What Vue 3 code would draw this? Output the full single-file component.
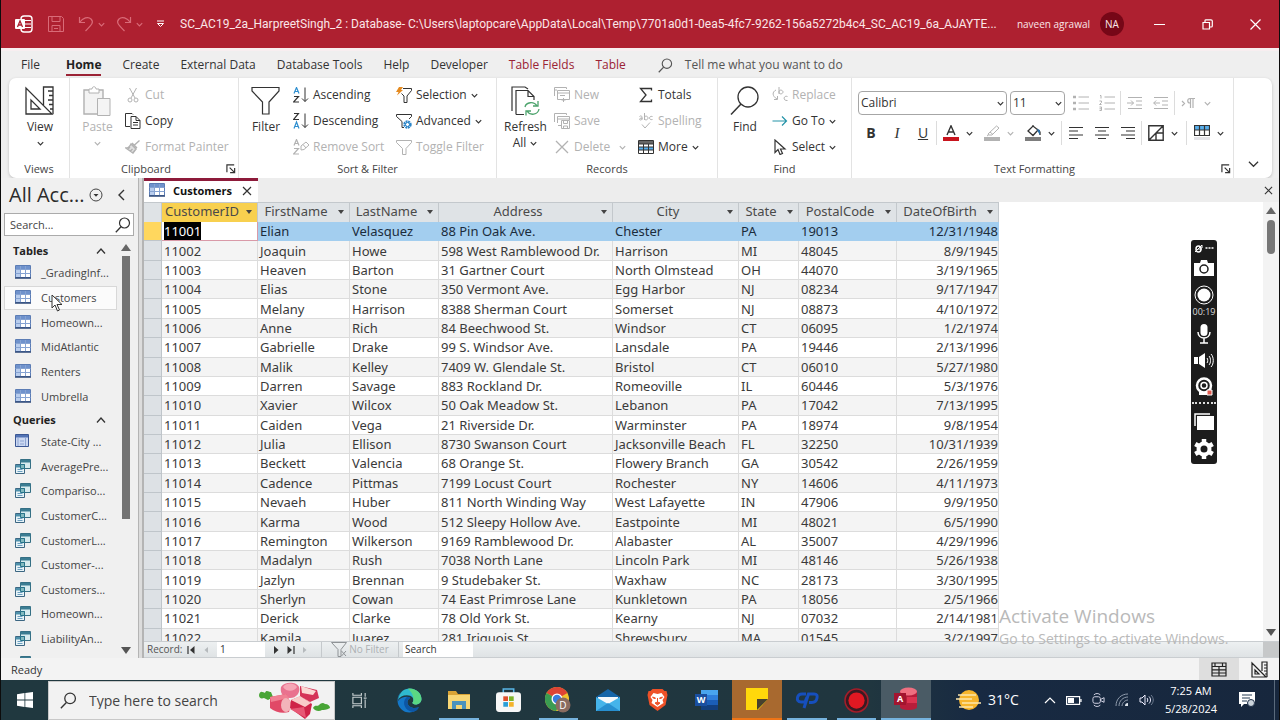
<script setup>
import { h } from 'vue'

const svgIcon = (props) =>
  h('svg', {
    viewBox: props.box || '0 0 16 16',
    width: props.w || 16,
    height: props.h || props.w || 16,
    fill: 'none',
    stroke: 'currentColor',
    'aria-hidden': 'true',
    innerHTML: shapes[props.name],
  })
svgIcon.props = ['name', 'box', 'w', 'h']
const Icon = svgIcon

const shapes = {
  chev: '<path d="M2 3.500 5 6.500 8 3.500" stroke-width="1.300"/>',
  cut: '<path d="M4.500 1l5.500 10M11.500 1 6 11"/><circle cx="5" cy="13" r="2"/><circle cx="11" cy="13" r="2"/>',
  copy: '<path d="M5 13.500H.5v-13H7l1 1M6 3.500h5l4 4v8H6zM11 3.500v4h4M8 9.500h5M8 12h5"/>',
  painter: '<path d="M14.500 1.500 9.500 6M7 4l5 5M6 5l5 5-3 4-7-5c2 0 4-2 5-4zM3 10l2-2M5.500 12l2-2M8 14l2-3" stroke-width="1.400"/><path d="M6 5l5 5-3 4-4-3z" fill="currentColor" opacity=".4"/>',
  sortAZ: '<path d="M1 6.500 3.500.5 6 6.500M2 4.500h3" stroke="#2f8fd0" stroke-width="1.200"/><path d="M1 9.500h4.500l-5 5.500H6" stroke-width="1.200"/><path d="M12 .5v14M9 11.500l3 3 3-3"/>',
  sortZA: '<path d="M1 .5h4.500l-5 6H6" stroke-width="1.200"/><path d="M1 15.500 3.500 9 6 15.500M2 13.500h3" stroke="#2f8fd0" stroke-width="1.200"/><path d="M12 .5v14M9 11.500l3 3 3-3"/>',
  sortX: '<path d="M1 6.500 3.500.5 6 6.500M2 4.500h3M1 9.500h4.500l-5 5.500H6" stroke-width="1.200"/><path d="M8 7l5-4 3 3-5 4.500-3 .5zM10 5.500l3 3.500"/>',
  filterBig: '<path d="M1 1.500h27v3.500L18 16v12h-6.500V16L1 5z" stroke-width="1.200"/>',
  filterFlash: '<path d="M7 1.500h8.500v2L11 9v6.500H8V9L5.500 6.500"/><path d="M3 0h4L5 3h2L1 8.500 2.500 5H0z" fill="#e58a1f" stroke="none"/>',
  filterGear: '<path d="M8 14.500H6V8.500L.5 3.500v-2h15v2L13 6"/><circle cx="11.500" cy="11.500" r="3" stroke="#2d86c9" stroke-width="2.400" stroke-dasharray="1.800 .6"/><circle cx="11.500" cy="11.500" r="2" stroke="#2d86c9"/>',
  filter: '<path d="M.5 1.500h15v2L10 9.500v6H6.500v-6L.5 3.500z"/>',
  design: '<path d="M1 2v26h26zM6 14v9h9z" stroke-width="1.300"/><path d="M18.500 19V1H28v27M28 5h-5M28 9.500h-4M28 14h-5M28 18.500h-4M28 23h-3" stroke-width="1.300"/>',
  paste: '<path d="M7 4H1v24h13M7 4h13v8" stroke-width="1.400"/><path d="M1 4h19v8h-6v16H1z" fill="currentColor" opacity=".14"/><path d="M6 7V3h3c0-3 4-3 4 0h3v4z" fill="#fff"/><path d="M14.500 12.500H27v17H14.500z" fill="#f4f4f4"/>',
  refresh: '<path d="M1 25V1h13l3 2M5 28.500h8M5 28.500V4.500h12l6 6V14M17 4.500v6h6" stroke-width="1.200"/><path d="M14 21c1-5 9-6 12-1M27 15v5h-5M28 23c-1 6-9 7-12 2M15 29.500V25h5" stroke="#4ca36c" stroke-width="1.300"/>',
  newrec: '<path d="M.5 9V.5h12V2M3.500 12.500v-9h12v9h-12M3.500 6h12M6 8.500h5M9.500 11v4M7.500 13h4M1 3h2"/>',
  saverec: '<path d="M.5 9V.5h12V2M3.500 10V3.500h12V7M3.500 6h12M7.500 7.500h8v8h-8zM9.500 7.500v3h4v-3M9.500 15.500v-2.500h4v2.500M4 12.500h3"/>',
  del: '<path d="M2 2l12 12M14 2 2 14" stroke-width="1.300"/>',
  sigma: '<path d="M13.500 3.500v-2h-11L8 8l-5.500 6.500h11v-2" stroke-width="1.300"/>',
  spell: '<path d="M1.500 3.500c2-1.500 3 0 2.500 3M4 5c-3 0-3 2-1.500 2S4 6 4 5M6.500 0v7M6.500 5c0-3 3.500-2 3.500 0s-3.500 3-3.500 0M14.500 3.500c-4-1-4 4 0 3M4 11.500l3 3.500 5-5.500"/>',
  more: '<path d="M.5 1.500h15v13H.5z"/><path d="M1 2h14v3H1z" fill="#666" stroke="none"/><path d="M1 8h14v3H1z" fill="#58aeea" stroke="none"/><path d="M.5 5h15M.5 8h15M.5 11h15M5.500 5v9.500M10.500 5v9.500"/>',
  find: '<circle cx="18" cy="11" r="10" stroke-width="1.300"/><path d="M11 18 1 28.500" stroke-width="1.500"/>',
  replace: '<path d="M7 0v7M7 5c0-3 4-2 4 0s-4 3-4 0M15.500 9.500c-4-1.500-5 4.500 0 4M4 3c-4 2-4 6 1 9M2 12.500h3.500V9"/>',
  goto: '<path d="M.5 8h14M10 3.500 14.500 8 10 12.500" stroke="#2493a8" stroke-width="1.200"/>',
  pointer: '<path d="M3 1v12.500l3-3 2 5 2.500-1-2-4.500H13z" stroke-width="1.200"/>',
  bullets: '<path d="M0 2h3M0 8h3M0 14h3" stroke-width="2.500"/><path d="M5.500 2H16M5.500 8H16M5.500 14H16"/>',
  numbers: '<path d="M1 .5h1v3M.5 6h2v1.500l-2 2h2M.5 12h2v3.500h-2M.5 13.800h2"/><path d="M5.500 2H16M5.500 8H16M5.500 14H16"/>',
  indent: '<path d="M1 2.500h14M9 6h6M9 10h6M1 13.500h14M0 8h6.500M4 5.500 6.500 8 4 10.500"/>',
  outdent: '<path d="M1 2.500h14M9 6h6M9 10h6M1 13.500h14M7 8H.7M3.200 5.500.7 8l2.500 2.500"/>',
  ltr: '<path d="M1 6l2.500 2.500L1 11M9.500 13V3.500M12 13V3.500M14 3.500H9c-3 0-3 4.500 0 4.500" stroke-width="1.200"/>',
  fontcolor: '<path d="M4 10 8 .8 12 10M5.500 7h5" stroke-width="1.400"/><path d="M0 12h16v4H0z" fill="#c8141d" stroke="none"/>',
  marker: '<path d="M12.500 1 15 3 8 10H4.500L4 9zM6 7l3 2.500M4.500 10 3 11"/><path d="M0 12h16v4H0z" fill="currentColor" stroke="none"/>',
  bucket: '<path d="M3 6 8 1l5 4-5 5.500zM8 1V0M12 4l3 3v3" stroke-width="1.300"/><path d="M12 4l3 1v5l-2-3z" fill="#2b6fa8" stroke="none"/><path d="M0 12h16v4H0z" fill="#7d7d7d" stroke="none"/>',
  left: '<path d="M1 2.500h14M1 6h9M1 10h14M1 13.500h9" stroke-width="1.200"/>',
  center: '<path d="M1 2.500h14M4 6h8M1 10h14M4 13.500h8" stroke-width="1.200"/>',
  right: '<path d="M1 2.500h14M6 6h9M1 10h14M6 13.500h9" stroke-width="1.200"/>',
  gridlines: '<path d="M.8.8h14.400v14.400H.8zM.8 15.200 15.200.8M8 8v7M8 8h7" stroke-width="1.400"/>',
  altrow: '<path d="M1 1h14v4H1z" fill="#58aeea" stroke="none"/><path d="M.5.5h15v10H.5zM.5 5h15M5.500.5v10M10.500.5v10" stroke-width="1.200"/><path d="M0 12h16v3H0z" fill="#e4e4e8" stroke="none"/>',
  launch: '<path d="M1 9V1h8M4 4l5 5M9.500 4.500v5h-5" stroke-width="1.300"/>',
  mag: '<circle cx="9.500" cy="6" r="5" stroke-width="1.200"/><path d="M6 9.800.8 15.200" stroke-width="1.300"/>',
  x: '<path d="M1 1l8 8M9 1 1 9" stroke-width="1.200"/>',
  table: '<path d="M.5.5h15v12H.5z" fill="#fff" stroke="#5b7cb4"/><path d="M1 1h14v3H1z" fill="#6f92cc" stroke="none"/><path d="M1 4h4v8H1z" fill="#b8cdee" stroke="none"/><path d="M.5 4.500h15M.5 8.500h15M5.500 1v12M10.500 1v12" stroke="#86a3d2"/><path d="M0 13h16" stroke="#2e4977" stroke-width="1.500"/>',
  form: '<path d="M.5.5h13v12H.5z" fill="#cbd8f2" stroke="#3b5794"/><path d="M1 1h12v2.500H1z" fill="#5273b5" stroke="none"/><path d="M3 4v8M10.500 4v8M5 7h4M5 10h4" stroke="#8ea5d2"/>',
  query: '<path d="M5.500.5h10v9h-10z" fill="#d7ebef" stroke="#356f84"/><path d="M5.500 1h10v2.500h-10z" fill="#3b7c92" stroke="none"/><path d="M.5 5.500h9v9h-9z" fill="#e8f4f8" stroke="#3c6682"/><path d="M.5 6h9v2.500h-9z" fill="#4f91ab" stroke="none"/><path d="M2.500 10.500h5M2.500 12.500h5" stroke="#6c9fc0"/><path d="M5.500 5.500h4v4h-4z" fill="#83b9bf" stroke="#26748a"/>',
}

const navTabs = ['File', 'Home', 'Create', 'External Data', 'Database Tools', 'Help', 'Developer', 'Table Fields', 'Table']

const groups = [
  { name: 'Views', cls: 'g-views', big: { label: 'View', icon: 'design', chev: true }, cols: [] },
  {
    name: 'Clipboard', cls: 'g-clip', launch: true,
    big: { label: 'Paste', icon: 'paste', chev: true, off: true },
    cols: [[['cut', 'Cut', 1], ['copy', 'Copy'], ['painter', 'Format Painter', 1]]],
  },
  {
    name: 'Sort & Filter', cls: 'g-sort', big: { label: 'Filter', icon: 'filterBig' },
    cols: [
      [['sortAZ', 'Ascending'], ['sortZA', 'Descending'], ['sortX', 'Remove Sort', 1]],
      [['filterFlash', 'Selection', 0, 1], ['filterGear', 'Advanced', 0, 1], ['filter', 'Toggle Filter', 1]],
    ],
  },
  {
    name: 'Records', cls: 'g-rec', big: { label: 'Refresh', second: 'All', icon: 'refresh' },
    cols: [
      [['newrec', 'New', 1], ['saverec', 'Save', 1], ['del', 'Delete', 1, 2]],
      [['sigma', 'Totals'], ['spell', 'Spelling', 1], ['more', 'More', 0, 1]],
    ],
  },
  {
    name: 'Find', cls: 'g-find', big: { label: 'Find', icon: 'find' },
    cols: [[['replace', 'Replace', 1], ['goto', 'Go To', 0, 1], ['pointer', 'Select', 0, 1]]],
  },
]

const tables = ['_GradingInf...', 'Customers', 'Homeown...', 'MidAtlantic', 'Renters', 'Umbrella']
const queries = ['State-City ...', 'AveragePre...', 'Compariso...', 'CustomerC...', 'CustomerL...', 'Customer-...', 'Customers...', 'Homeown...', 'LiabilityAn...']

const columns = ['CustomerID', 'FirstName', 'LastName', 'Address', 'City', 'State', 'PostalCode', 'DateOfBirth']
const rows = `Elian|Velasquez|88 Pin Oak Ave.|Chester|PA|19013|12/31/1948
Joaquin|Howe|598 West Ramblewood Dr.|Harrison|MI|48045|8/9/1945
Heaven|Barton|31 Gartner Court|North Olmstead|OH|44070|3/19/1965
Elias|Stone|350 Vermont Ave.|Egg Harbor|NJ|08234|9/17/1947
Melany|Harrison|8388 Sherman Court|Somerset|NJ|08873|4/10/1972
Anne|Rich|84 Beechwood St.|Windsor|CT|06095|1/2/1974
Gabrielle|Drake|99 S. Windsor Ave.|Lansdale|PA|19446|2/13/1996
Malik|Kelley|7409 W. Glendale St.|Bristol|CT|06010|5/27/1980
Darren|Savage|883 Rockland Dr.|Romeoville|IL|60446|5/3/1976
Xavier|Wilcox|50 Oak Meadow St.|Lebanon|PA|17042|7/13/1995
Caiden|Vega|21 Riverside Dr.|Warminster|PA|18974|9/8/1954
Julia|Ellison|8730 Swanson Court|Jacksonville Beach|FL|32250|10/31/1939
Beckett|Valencia|68 Orange St.|Flowery Branch|GA|30542|2/26/1959
Cadence|Pittmas|7199 Locust Court|Rochester|NY|14606|4/11/1973
Nevaeh|Huber|811 North Winding Way|West Lafayette|IN|47906|9/9/1950
Karma|Wood|512 Sleepy Hollow Ave.|Eastpointe|MI|48021|6/5/1990
Remington|Wilkerson|9169 Ramblewood Dr.|Alabaster|AL|35007|4/29/1996
Madalyn|Rush|7038 North Lane|Lincoln Park|MI|48146|5/26/1938
Jazlyn|Brennan|9 Studebaker St.|Waxhaw|NC|28173|3/30/1995
Sherlyn|Cowan|74 East Primrose Lane|Kunkletown|PA|18056|2/5/1966
Derick|Clarke|78 Old York St.|Kearny|NJ|07032|2/14/1981
Kamila|Juarez|281 Iriquois St.|Shrewsbury|MA|01545|3/2/1997`
  .split('\n')
  .map((line, i) => [String(11001 + i), ...line.split('|')])
</script>

<template>
  <div class="screen">
    <header class="titlebar">
      <div class="quick">
        <svg class="logo" viewBox="0 0 18 18" width="18" height="18" aria-hidden="true">
          <rect x="6" y="1" width="11" height="16" rx="3" fill="none" stroke="#fff" stroke-width="1.400" />
          <path d="M8 5.500h8M8 9h8M8 12.500h8" stroke="#fff" />
          <rect x="0" y="4" width="10" height="10" rx="1" fill="#fff" />
          <path d="M2.500 12 5 6l2.500 6M3.500 10h3" fill="none" stroke="#ae2030" stroke-width="1.300" />
        </svg>
        <button class="qbtn save" aria-label="Save"><svg viewBox="0 0 16 16" width="16" height="16"><path d="M.5.5h13l2 2v13H.5zM4 .5v5h8v-5M4 15.500v-6h8v6M6 12.500h4" fill="none" stroke="currentColor" /></svg></button>
        <button class="qbtn undo" aria-label="Undo"><svg viewBox="0 0 16 16" width="16" height="16"><path d="M1.500 1v5.500H7M1.500 6.500C5 2 10 0 13 3s1.500 5-5.500 12" fill="none" stroke="currentColor" stroke-width="1.200" /></svg><Icon name="chev" box="0 0 10 10" w="9" /></button>
        <button class="qbtn redo" aria-label="Redo"><svg viewBox="0 0 16 16" width="16" height="16"><path d="M14.500 1v5.500H9M14.500 6.500C11 2 6 0 3 3s-1.500 5 5.500 12" fill="none" stroke="currentColor" stroke-width="1.200" /></svg><Icon name="chev" box="0 0 10 10" w="9" /></button>
        <button class="qbtn custom" aria-label="Customize toolbar"><svg viewBox="0 0 9 8" width="9" height="8"><path d="M1 1h7M1.500 3.500 4.500 6.500 7.500 3.500z" fill="none" stroke="#fff" /></svg></button>
      </div>
      <div class="title">SC_AC19_2a_HarpreetSingh_2 : Database- C:\Users\laptopcare\AppData\Local\Temp\7701a0d1-0ea5-4fc7-9262-156a5272b4c4_SC_AC19_6a_AJAYTE...</div>
      <div class="account"><span>naveen agrawal</span><b class="avatar">NA</b></div>
      <div class="winbtns">
        <button aria-label="Minimize"><svg viewBox="0 0 11 11" width="11" height="11"><path d="M0 5.500h11" stroke="#fff" /></svg></button>
        <button aria-label="Restore"><svg viewBox="0 0 11 11" width="11" height="11"><path d="M1 3.500h6.500V10H1zM3 3V1.500C3 1 3.500.8 4 .8h5c1 0 1.300.3 1.300 1.300V7c0 .7-.3 1-1 1H8" fill="none" stroke="#fff" stroke-width="1.200" /></svg></button>
        <button aria-label="Close"><svg viewBox="0 0 11 11" width="11" height="11"><path d="M.5.5l10 10M10.500.5l-10 10" stroke="#fff" stroke-width="1.200" /></svg></button>
      </div>
    </header>

    <nav class="tabs">
      <button v-for="t in navTabs" :key="t" :class="{ current: t === 'Home', context: t.startsWith('Table') }"><span>{{ t }}</span></button>
      <button class="tell"><Icon name="mag" w="15" /> Tell me what you want to do</button>
    </nav>

    <section class="ribbon">
      <div v-for="g in groups" :key="g.name" class="group" :class="g.cls">
        <div class="body">
          <button class="big" :class="{ off: g.big.off, two: g.big.second }">
            <Icon :name="g.big.icon" box="0 0 30 30" w="30" />
            <span>{{ g.big.label }}</span>
            <span v-if="g.big.second" class="second">{{ g.big.second }} <Icon name="chev" box="0 0 10 10" w="9" /></span>
            <Icon v-if="g.big.chev" name="chev" box="0 0 10 10" w="9" />
          </button>
          <div v-for="(c, i) in g.cols" :key="i" class="col">
            <button v-for="b in c" :key="b[1]" class="small" :class="{ off: b[2], far: b[3] === 2 }">
              <Icon :name="b[0]" /><span>{{ b[1] }}</span><Icon v-if="b[3]" class="dd" name="chev" box="0 0 10 10" w="9" />
            </button>
          </div>
        </div>
        <div class="caption"><span>{{ g.name }}</span><button v-if="g.launch" aria-label="Clipboard options"><Icon name="launch" box="0 0 11 11" w="10" /></button></div>
      </div>

      <div class="group g-text">
        <div class="fmt">
          <div class="line first">
            <label class="pick font"><select aria-label="Font"><option>Calibri</option></select><Icon name="chev" box="0 0 10 10" w="9" /></label>
            <label class="pick size"><select aria-label="Font size"><option>11</option></select><Icon name="chev" box="0 0 10 10" w="9" /></label>
            <button class="ib off" aria-label="Bullets"><Icon name="bullets" /></button>
            <button class="ib off" aria-label="Numbering"><Icon name="numbers" /></button>
            <i class="sep"></i>
            <button class="ib off" aria-label="Increase indent"><Icon name="indent" /></button>
            <button class="ib off" aria-label="Decrease indent"><Icon name="outdent" /></button>
            <i class="sep"></i>
            <button class="split off" aria-label="Text direction"><Icon name="ltr" /><Icon name="chev" box="0 0 10 10" w="9" /></button>
          </div>
          <div class="line">
            <button class="ib" aria-label="Bold"><b>B</b></button>
            <button class="ib" aria-label="Italic"><em>I</em></button>
            <button class="ib" aria-label="Underline"><u>U</u></button>
            <i class="sep"></i>
            <button class="split" aria-label="Font color"><Icon name="fontcolor" /><Icon name="chev" box="0 0 10 10" w="9" /></button>
            <button class="split off" aria-label="Highlight"><Icon name="marker" /><Icon name="chev" box="0 0 10 10" w="9" /></button>
            <button class="split" aria-label="Fill color"><Icon name="bucket" /><Icon name="chev" box="0 0 10 10" w="9" /></button>
            <i class="sep"></i>
            <button class="ib" aria-label="Align left"><Icon name="left" /></button>
            <button class="ib" aria-label="Center"><Icon name="center" /></button>
            <button class="ib" aria-label="Align right"><Icon name="right" /></button>
            <i class="sep"></i>
            <button class="split" aria-label="Gridlines"><Icon name="gridlines" /><Icon name="chev" box="0 0 10 10" w="9" /></button>
            <i class="sep wide"></i>
            <button class="split" aria-label="Alternate row color"><Icon name="altrow" /><Icon name="chev" box="0 0 10 10" w="9" /></button>
          </div>
        </div>
        <div class="caption"><span>Text Formatting</span><button aria-label="Text formatting options"><Icon name="launch" box="0 0 11 11" w="10" /></button></div>
      </div>
      <button class="collapse" aria-label="Collapse ribbon"><svg viewBox="0 0 12 8" width="11" height="8"><path d="M1 1.500 6 6.500 11 1.500" fill="none" stroke="#333" stroke-width="1.300" /></svg></button>
    </section>

    <div class="work">
      <aside class="side">
        <div class="shead">
          <h2>All Acc...</h2>
          <button aria-label="Object type menu"><svg viewBox="0 0 14 14" width="14" height="14"><circle cx="7" cy="7" r="6" fill="none" stroke="#444" /><path d="M4.500 6h5L7 8.800z" fill="#333" /></svg></button>
          <button class="shut" aria-label="Collapse pane"><svg viewBox="0 0 7 12" width="7" height="12"><path d="M6 1 1 6l5 5" fill="none" stroke="#333" stroke-width="1.400" /></svg></button>
        </div>
        <label class="sfind"><input type="text" placeholder="Search..." aria-label="Search objects" /><Icon name="mag" w="16" /></label>
        <div class="objects">
          <div class="lists">
            <button class="ohead">Tables <svg viewBox="0 0 10 6" width="10" height="6"><path d="M1 5.500 5 1l4 4.500" fill="none" stroke="#333" stroke-width="1.300" /></svg></button>
            <ul class="six"><li v-for="t in tables" :key="t"><a href="#" :class="{ hot: t === 'Customers' }"><Icon name="table" /><span>{{ t }}</span></a></li></ul>
            <button class="ohead">Queries <svg viewBox="0 0 10 6" width="10" height="6"><path d="M1 5.500 5 1l4 4.500" fill="none" stroke="#333" stroke-width="1.300" /></svg></button>
            <ul class="ten"><li v-for="(t, i) in queries" :key="t"><a href="#"><Icon :name="i ? 'query' : 'form'" /><span>{{ t }}</span></a></li><li><a href="#" aria-label="Next query"><Icon name="query" /></a></li></ul>
          </div>
          <div class="sbar"><i class="up"></i><i class="thumb"></i><i class="space"></i><i class="down"></i></div>
        </div>
      </aside>
      <div class="splitter"></div>

      <main class="doc">
        <div class="doctabs">
          <div class="doctab"><Icon name="table" /><b>Customers</b><button aria-label="Close Customers"><Icon name="x" box="0 0 10 10" w="10" /></button></div>
          <button class="closeall" aria-label="Close"><Icon name="x" box="0 0 10 10" w="9" /></button>
        </div>
        <div class="sheet">
          <div class="viewport">
            <table>
              <colgroup><col class="c0" /><col v-for="c in columns" :key="c" :class="'c-' + c" /></colgroup>
              <thead>
                <tr><th class="sel"></th><th v-for="(c, i) in columns" :key="c" :class="{ active: i === 0 }"><div><span>{{ c }}</span><i class="arr"></i></div></th></tr>
              </thead>
              <tbody>
                <tr v-for="(r, i) in rows" :key="r[0]" :class="{ chosen: i === 0 }"><td class="sel"></td><td v-for="(v, j) in r" :key="j"><span>{{ v }}</span></td></tr>
              </tbody>
            </table>
          </div>
          <div class="vbar"><i class="up"></i><i class="thumb"></i><i class="space"></i><i class="down"></i></div>
        </div>
        <div class="recnav">
          <span class="rl">Record:</span>
          <button aria-label="First record"><svg viewBox="0 0 8 8" width="8" height="8"><path d="M1 0v8" stroke="#333" stroke-width="1.200" /><path d="M7.500 0v8L3 4z" fill="#333" /></svg></button>
          <button aria-label="Previous record"><svg viewBox="0 0 8 8" width="8" height="8"><path d="M6 1v6L2.500 4z" fill="#b5b9bc" /></svg></button>
          <input class="num" type="text" value="1" aria-label="Current record" />
          <button aria-label="Next record"><svg viewBox="0 0 8 8" width="8" height="8"><path d="M2 0v8l4.500-4z" fill="#333" /></svg></button>
          <button aria-label="Last record"><svg viewBox="0 0 8 8" width="8" height="8"><path d="M7 0v8" stroke="#333" stroke-width="1.200" /><path d="M.5 0v8L5 4z" fill="#333" /></svg></button>
          <button class="newr" aria-label="New record"><svg viewBox="0 0 8 8" width="8" height="8"><path d="M2 1v6l3.500-3z" fill="#b5b9bc" /></svg></button>
          <button class="nofilter"><svg viewBox="0 0 16 15" width="16" height="15"><path d="M.5.500h15L10 7.500v7H7v-7zM10.500 9l4.500 5M15 9l-4.500 5" fill="none" stroke="#8f9396" /></svg>No Filter</button>
          <input class="rsearch" type="text" value="Search" aria-label="Search records" />
          <i class="corner"></i>
        </div>
        <div class="watermark"><p>Activate Windows</p><p class="sub">Go to Settings to activate Windows.</p></div>
      </main>
    </div>

    <footer class="status">
      <span>Ready</span>
      <button class="on" aria-label="Datasheet view"><svg viewBox="0 0 16 15" width="16" height="15"><path d="M1 1h14v13H1zM1 4.500h14M1 7.800h14M1 11h14M8 4.500V14M4 1v3M11.500 1v3" fill="none" stroke="#222" stroke-width="1.200" /></svg></button>
      <button aria-label="Design view"><svg viewBox="0 0 17 17" width="17" height="17"><path d="M1 2v14h14zM4 9v4h4zM11 10V1h5v15M16 4h-3M16 7h-3M16 10h-3M16 13h-2" fill="none" stroke="#222" stroke-width="1.200" /></svg></button>
    </footer>

    <div class="taskbar">
      <button class="start" aria-label="Start"><svg viewBox="0 0 16 16" width="16" height="16"><path d="M0 2.200 7.500 1v6.600H0zM8.300.9 16 0v7.600H8.300zM0 8.400h7.500V15L0 13.800zM8.300 8.400H16V16l-7.700-1z" fill="#fff" /></svg></button>
      <label class="tsearch">
        <Icon name="mag" w="17" />
        <input type="text" placeholder="Type here to search" aria-label="Type here to search" />
        <svg viewBox="0 0 72 38" width="72" height="38" aria-hidden="true">
          <path d="M1 14c1-5 4-3 6-2 1-4 4-1 6-1l2 5-5 3-4-2c-3 1-5 0-5-3zM55 27c2-4 4-1 6-3s4-3 6-1c3 0 5 2 5 4-4 2-6 2-8 2-3 2-7 1-9-2z" fill="#48a536" />
          <path d="M23 6c4-6 16-5 18 0 2 6-4 12-10 11-7-1-9-6-8-11z" fill="#e9728f" /><path d="M25 6c4-5 12-4 14 0-2 4-10 6-14 0z" fill="#f6a7b6" />
          <path d="M12 16l16-3 5 9-2 9c-7 2-14 0-19-4z" fill="#e14967" /><path d="M12 16l16-3 3 4-18 4z" fill="#f08093" /><ellipse cx="28" cy="24" rx="5" ry="7" fill="#f3b4ba" />
          <path d="M42 5l17 4 2 8-9 4-10-6z" fill="#d53457" /><path d="M43 5l15 5-3 4-11-2z" fill="#fbd8d3" />
          <path d="M33 19l10-4 11 8-2 10-5 5-15-11z" fill="#cf2348" /><path d="M33 19l9-4 11 7-6 4z" fill="#f9cbc9" /><path d="M32 28l14-2 2 11z" fill="#e75875" />
        </svg>
      </label>
      <div class="apps">
        <button aria-label="Task view"><svg viewBox="0 0 18 18" width="17" height="17"><path d="M2 1v2.500h9V1M2 17v-2.500h9V17M2 5.500h9v7H2zM15 1v4M15 8v9M13.500 6.500h3" fill="none" stroke="#c8d0d2" stroke-width="1.200" /></svg></button>
        <button aria-label="Edge"><svg viewBox="0 0 24 24" width="25" height="25"><path d="M12 .5A11.500 11.500 0 1 0 12 23.500c4 0 7-2 9-5-5 2-11 0-11-5 0-2 2-4 3-4-3-2-9-1-12 3C1 5 6 .5 12 .5z" fill="#1477c8" /><path d="M1 11.500C2 4 7 .5 12 .5c7 0 11.500 5 11.500 10 0 4-4 6-7 5-2-.5-2-1.500-1-2.500 1-3-1-6-6-6-4 0-7 2-8.500 4.500z" fill="#2fb9cf" /><path d="M12 .5c7 0 11.500 5 11.500 10 0 4-4 6-7 5-2-.5-2-1.500-1-2.500 1-3 0-8-5-12.400z" fill="#5bd683" /><path d="M9 9c-5 5-1 13 6 14 3-.5 5-2 6-4.500-5 2-11 0-11-5 0-2 1-3 3-4-1-1-3-1-4-.5z" fill="#0d56a4" /></svg></button>
        <button class="run" aria-label="File Explorer"><svg viewBox="0 0 24 20" width="24" height="20"><path d="M1 1h8l2 3h12v15H1z" fill="#d9a436" /><path d="M1 5h22v14H1z" fill="#f8d775" /><path d="M5 19v-8h14v8h-4v-4H9v4z" fill="#4c93bd" /></svg></button>
        <button aria-label="Store"><svg viewBox="0 0 24 24" width="25" height="25"><path d="M7 5V1h10v4" fill="none" stroke="#58b6e8" stroke-width="1.500" /><rect x="0" y="4" width="24" height="19" rx="3" fill="#f7f7f7" /><path d="M7 8h4.500v4.500H7z" fill="#e0502c" /><path d="M12.500 8H17v4.500h-4.500z" fill="#7fb52c" /><path d="M7 13.500h4.500V18H7z" fill="#2a9ed8" /><path d="M12.500 13.500H17V18h-4.500z" fill="#f4b32a" /></svg></button>
        <button class="run" aria-label="Chrome"><svg viewBox="0 0 26 26" width="26" height="26"><circle cx="12" cy="12" r="12" fill="#f0c22e" /><path d="M12 12 1.600 6A12 12 0 0 1 22.400 6z" fill="#dd4435" /><path d="M12 12 1.600 6A12 12 0 0 0 11 24l5-9z" fill="#3a9c52" /><circle cx="12" cy="12" r="5.500" fill="#fff" /><circle cx="12" cy="12" r="4.200" fill="#3b7de0" /><circle cx="18" cy="18" r="7.500" fill="#8a6b60" /><text x="18" y="21.500" text-anchor="middle" class="dtext">D</text></svg></button>
        <button aria-label="Mail"><svg viewBox="0 0 24 22" width="24" height="22"><path d="M0 8 12 0l12 8v4H0z" fill="#1565a8" /><path d="M2 8h20v8H2z" fill="#f4f8fb" /><path d="M0 8v14h24V8L12 15z" fill="#45b4ea" /><path d="M0 22l12-8 12 8z" fill="#278fd0" /></svg></button>
        <button aria-label="Brave"><svg viewBox="0 0 20 24" width="21" height="24"><path d="M5 1h10l2 2h2l1 4-2 10-8 6-8-6L0 7l1-4h2z" fill="#ee5128" /><path d="M6 5l4 1 4-1 3 4-2 3 1 3-6 4-6-4 1-3-2-3z" fill="#fff" /><path d="M5 9l3 1-1 1zM15 9l-3 1 1 1zM10 10v4M7.500 15 10 14l2.500 1L10 17z" fill="#ee5128" stroke="#ee5128" /></svg></button>
        <button aria-label="Word"><svg viewBox="0 0 24 22" width="24" height="22"><path d="M6 1h17v20H6z" fill="#1b5eb8" /><path d="M6 1h17v5H6z" fill="#49a5ee" /><path d="M6 6h17v5H6z" fill="#2f7fdb" /><path d="M6 16h17v5H6z" fill="#123f7f" /><path d="M0 5h12v12H0z" fill="#1a4fa0" /><text x="6" y="14" text-anchor="middle" class="wtext">W</text></svg></button>
        <button class="sticky" aria-label="Sticky Notes"><svg viewBox="0 0 22 22" width="22" height="22"><path d="M0 0h22v11L12 22H0z" fill="#ffd80b" /><path d="M11 11h11L11 22z" fill="#47412e" /></svg></button>
        <button class="run" aria-label="Messenger"><svg viewBox="0 0 24 18" width="24" height="18"><path d="M11 3H7C4 3 3 4 2.500 6.500S3 11 6 11h4l2-5M9 17l4.500-14H19c3 0 3.500 1.500 3 4s-2 4.500-5 4.500h-3" fill="none" stroke="#164fbd" stroke-width="3" /></svg></button>
        <button class="run" aria-label="Recording"><svg viewBox="0 0 24 24" width="25" height="25"><circle cx="12" cy="12" r="11" fill="#3a1a22" stroke="#a51d29" stroke-width="1.500" /><circle cx="12" cy="12" r="7.800" fill="#e01822" /></svg></button>
        <button class="front" aria-label="Access"><svg viewBox="0 0 24 24" width="24" height="24"><path d="M6 4v16c0 4 17 4 17 0V4z" fill="#b71d3a" /><path d="M13 10h10v6H13z" fill="#dc3350" /><ellipse cx="14.500" cy="4.500" rx="8.500" ry="4" fill="#ef6f80" /><path d="M0 6h12v12H0z" fill="#a3152f" /><text x="6" y="15" text-anchor="middle" class="wtext">A</text></svg></button>
      </div>
      <div class="tray">
        <button class="weather"><svg viewBox="0 0 26 22" width="26" height="22"><circle cx="13" cy="11" r="10" fill="#f7b52c" /><path d="M2 6h18M0 10h16M6 14h19M3 18h14" stroke="#fde6ac" stroke-width="1.500" /></svg>31°C</button>
        <button class="t" aria-label="Show hidden icons"><svg viewBox="0 0 12 7" width="12" height="7"><path d="M1 6 6 1l5 5" fill="none" stroke="#fff" stroke-width="1.200" /></svg></button>
        <button class="t" aria-label="Battery"><svg viewBox="0 0 16 9" width="16" height="9"><path d="M.6.6h13v7.800H.6zM15 3v3" fill="none" stroke="#fff" stroke-width="1.200" /><path d="M2 2h6v5H2z" fill="#fff" /></svg></button>
        <button class="t" aria-label="Meet now"><svg viewBox="0 0 14 16" width="13" height="16"><rect x="1" y="4.500" width="8" height="7" rx="2" fill="none" stroke="#dde" /><path d="M9 7.500l4-2v5l-4-2M2 2.500c2-2 5-2 7 0M2 13.500c2 2 5 2 7 0" fill="none" stroke="#dde" /></svg></button>
        <button class="t" aria-label="Network"><svg viewBox="0 0 14 14" width="14" height="14"><path d="M1 13C1 6 6 1 13 1M4 13c0-5 4-9 9-9M7 13c0-3 3-6 6-6" fill="none" stroke="#8e9aab" /><path d="M10 13c0-2 1-3 3-3v3z" fill="#dfe5ec" /></svg></button>
        <button class="t" aria-label="Volume"><svg viewBox="0 0 15 12" width="15" height="12"><path d="M1 4h2l3-3v10L3 8H1zM8 4c1 1 1 3 0 4M10 2.500c2 2 2 5 0 7" fill="none" stroke="#eef" /><path d="M12 1c3 3 3 7 0 10" fill="none" stroke="#6d7b90" /></svg></button>
        <button class="clock"><span>7:25 AM</span><span>5/28/2024</span></button>
        <button class="notif" aria-label="Notifications"><svg viewBox="0 0 17 16" width="17" height="16"><path d="M0 0h16v12H5l-3 3v-3H0z" fill="#fff" /><path d="M3 3h10M3 6h8M3 9h5" stroke="#253a52" /><circle cx="12" cy="11" r="3.500" fill="#ccd4dc" stroke="#1b2c44" /></svg></button>
        <i class="peek"></i>
      </div>
    </div>

    <div class="recorder">
      <svg viewBox="0 0 20 9" width="20" height="9"><ellipse cx="4.500" cy="5" rx="2.500" ry="3" fill="none" stroke="#fff" stroke-width="1.500" /><path d="M1 8 8 1v3M4 5h4" fill="none" stroke="#fff" /><path d="M11.500 4h2M14.500 4h2M17.500 4h2" stroke="#fff" stroke-width="1.500" /></svg>
      <button aria-label="Screenshot"><svg viewBox="0 0 20 16" width="20" height="16"><path d="M0 3h6l1-3h6l1 3h6v13H0z" fill="#fff" /><circle cx="10" cy="9" r="4" fill="none" stroke="#1c1c1c" stroke-width="1.500" /></svg></button>
      <button aria-label="Record"><svg viewBox="0 0 20 20" width="20" height="20"><circle cx="10" cy="10" r="9" fill="none" stroke="#fff" /><circle cx="10" cy="10" r="6.500" fill="#fff" /></svg></button>
      <time>00:19</time>
      <button aria-label="Microphone"><svg viewBox="0 0 16 20" width="16" height="20"><rect x="4.500" y="0" width="7" height="12" rx="3.500" fill="#fff" /><path d="M2 8c0 8 12 8 12 0M8 14v5M4 19h8" fill="none" stroke="#fff" stroke-width="1.500" /></svg></button>
      <button aria-label="Sound"><svg viewBox="0 0 20 15" width="20" height="15"><path d="M0 4h4v7H0zM5 4l6-4v15l-6-4z" fill="#fff" /><path d="M13 5c1 1 1 4 0 5M15 3c2 2 2 7 0 9M17 1c3 3 3 10 0 13" fill="none" stroke="#fff" /></svg></button>
      <button aria-label="Webcam"><svg viewBox="0 0 18 20" width="18" height="20"><circle cx="9" cy="8.500" r="7" fill="#1c1c1c" stroke="#fff" stroke-width="2.500" /><circle cx="9" cy="8.500" r="3" fill="none" stroke="#fff" stroke-width="1.500" /><path d="M4 15h10v3H4z" fill="#fff" /><path d="M12 13h5v5h-5z" fill="#e05a4e" stroke="#fff" /></svg></button>
      <i class="dash"></i>
      <button aria-label="Windows"><svg viewBox="0 0 20 17" width="20" height="17"><path d="M1 13V1h15" fill="none" stroke="#fff" stroke-width="1.500" /><path d="M3 3h17v14H3z" fill="#fff" /></svg></button>
      <button aria-label="Settings"><svg viewBox="0 0 20 20" width="20" height="20"><circle cx="10" cy="10" r="5.500" fill="none" stroke="#fff" stroke-width="4" /><path d="M10 0v4M10 16v4M1.300 5l3.500 2M15.200 13l3.500 2M1.300 15l3.500-2M15.200 7l3.500-2" stroke="#fff" stroke-width="4.500" /></svg></button>
    </div>

    <svg class="cursor" viewBox="0 0 12 18" width="12" height="18" aria-hidden="true"><path d="M1 1v13l3-3 2.500 6 2-1L6 10.500h5z" fill="#fff" stroke="#333" /></svg>
  </div>
</template>

<style>
html, body, #app { height: 100%; }
body { overflow: hidden; }
</style>

<style scoped>
* { box-sizing: border-box; }
.screen { position: relative; display: flex; flex-direction: column; height: 100vh; min-height: 480px; overflow: hidden; background: #efefef; border: solid #0c0c0c; border-width: 0 1px; font: 12px/16px "Open Sans", "Noto Sans", sans-serif; color: #333; }
button { display: flex; align-items: center; padding: 0; border: 0; background: none; font: inherit; color: inherit; white-space: nowrap; }
input, select { min-width: 0; border: 0; outline: 0; background: none; font: inherit; color: inherit; }
svg { display: block; flex: none; }
.off { color: #b2b2b2; }

.titlebar { display: flex; align-items: center; flex: none; height: 48px; background: #ae2030; color: #fbe6e8; }
.quick { display: flex; align-items: center; flex: none; width: 179px; padding-left: 14px; }
.qbtn { color: #d96b78; gap: 3px; }
.save { margin-left: 15px; }
.undo { margin-left: 14px; }
.redo { margin-left: 10px; }
.custom { margin-left: 12px; }
.title { flex: 1; min-width: 0; overflow: hidden; white-space: nowrap; font-family: Roboto, "Open Sans", sans-serif; }
.account { display: flex; align-items: center; gap: 10px; flex: none; margin-left: 16px; font-size: 10px; }
.avatar { display: flex; align-items: center; justify-content: center; width: 24px; height: 24px; border-radius: 50%; background: #760717; font-weight: 400; }
.winbtns { display: flex; margin-left: 11px; height: 48px; }
.winbtns button { width: 48px; justify-content: center; }

.tabs { display: flex; flex: none; height: 30px; padding: 5px 0 0 10px; border-top: 3px solid #f8eef0; background: #efefef; }
.tabs button { padding: 0 0 4px; margin: 0 11px 0 10px; }
.tabs button:first-child { margin-right: 16px; }
.tabs span { border-bottom: 2px solid transparent; line-height: 19px; }
.tabs .current span { border-color: #9b2335; font-weight: 700; color: #222; }
.tabs .context { color: #9b2335; }
.tabs .tell { gap: 12px; margin-left: 21px; color: #555; }

.ribbon { display: flex; flex: none; height: 100px; margin: 0 7px 0 8px; border-radius: 7px; background: #fff; box-shadow: 0 1px 3px #bbb; }
.group { display: flex; flex-direction: column; flex: none; padding-top: 4px; border-right: 1px solid #e3e3e3; }
.body { display: flex; flex: none; height: 78px; }
.g-views { width: 61px; }
.g-clip { width: 169px; }
.g-sort { width: 258px; }
.g-rec { width: 221px; }
.g-find { width: 134px; }
.g-text { flex: 1; }
.big { flex: none; flex-direction: column; width: 55px; padding-top: 4px; }
.big span { line-height: 16px; margin: 3px 0 4px; }
.g-views .big { width: 62px; }
.g-rec .big { width: 57px; }
.g-sort .big, .g-find .big { width: 54px; }
.two span { margin: 3px 0 0; }
.big .second { display: flex; align-items: center; gap: 3px; margin: 0; }
.col { display: flex; flex-direction: column; flex: none; }
.g-sort .col { width: 103px; }
.g-rec .col { width: 84px; }
.small { height: 26px; gap: 4px; }
.small .dd { margin-left: -1px; }
.far .dd { margin-left: 4px; }
.caption { display: flex; align-items: center; height: 17px; font-size: 11px; color: #444; }
.caption span { flex: 1; text-align: center; }
.caption button { flex: none; width: 16px; padding-right: 2px; justify-content: flex-end; color: #333; }

.fmt { height: 78px; padding: 9px 0 0 6px; }
.line { display: flex; align-items: center; height: 26px; }
.first { height: 28px; margin-bottom: 1px; padding-bottom: 4px; }
.pick { display: grid; align-items: center; flex: none; height: 24px; margin-right: 3px; border: 1px solid #a6a6a6; border-radius: 4px; }
.pick > * { grid-area: 1 / 1; }
.pick select { appearance: none; width: 100%; padding: 0 2px; }
.pick svg { justify-self: end; margin-right: 1px; pointer-events: none; }
.font { width: 149px; }
.size { width: 55px; }
.ib { flex: none; justify-content: center; width: 26px; height: 24px; font-size: 14px; }
.ib em { font-family: "Liberation Serif", serif; font-size: 15px; }
.sep { flex: none; width: 1px; height: 24px; margin-right: 1px; background: #dcdcdc; }
.wide { margin: 0 2px; }
.split { flex: none; gap: 6px; width: 41px; height: 24px; padding-left: 5px; }
.collapse { flex: none; align-self: flex-end; justify-content: center; width: 38px; height: 28px; }

.work { display: flex; flex: 1; min-height: 0; }
.side { display: flex; flex-direction: column; flex: none; width: 137px; padding: 3px 4px 0 3px; background: #f0f0f0; overflow: hidden; font-size: 11px; }
.shead { display: flex; align-items: center; height: 28px; margin: 0 0 4px 5px; }
h2 { margin: 0; font-size: 20px; line-height: 28px; font-weight: 400; color: #2b2b2b; width: 80px; white-space: nowrap; }
.shut { margin-left: 15px; }
.sfind { display: flex; align-items: center; flex: none; height: 23px; width: 130px; padding: 0 2px 0 5px; border: 1px solid #ababab; background: #fff; }
.sfind input { flex: 1; width: 60px; padding: 0; }
.sfind input::placeholder { color: #444; opacity: 1; }
.objects { display: flex; flex: 1; min-height: 0; margin-top: 4px; }
.lists { width: 113px; overflow: hidden; }
.ohead { width: 102px; height: 21px; margin-left: 9px; padding-right: 9px; justify-content: space-between; font-weight: 700; color: #222; }
ul { display: grid; grid-auto-rows: 1fr; margin: 0; padding: 0; list-style: none; }
.six { height: 148px; }
.ten { height: 246px; }
li { min-height: 0; }
li a { display: flex; align-items: center; height: 100%; gap: 10px; padding-left: 10px; border: 1px solid transparent; color: #444; text-decoration: none; white-space: nowrap; }
li a.hot { border-color: #d8d8d8; background: #fbfbfb; }
.sbar { display: flex; flex-direction: column; align-items: center; flex: none; width: 17px; padding: 4px 0; }
.up, .down { border: 5px solid transparent; }
.up { border-bottom: 7px solid #666; border-top: 0; }
.down { border-top: 7px solid #555; border-bottom: 0; }
.sbar .thumb { height: 263px; width: 8px; margin-top: 5px; background: #737373; }
.space { flex: 1; }
.splitter { flex: none; width: 6px; border: solid #b4b4b4; border-width: 0 2px 0 1px; background: #dcdcdc; }

.doc { position: relative; display: flex; flex-direction: column; flex: 1; min-width: 0; }
.doctabs { display: flex; justify-content: space-between; flex: none; height: 24px; background: #ededed; }
.doctab { display: flex; align-items: center; width: 114px; padding: 0 6px 2px 5px; gap: 8px; border-top: 3px solid #8d1a3a; background: #fff; font-size: 11px; color: #111; }
.doctab button { margin-left: auto; color: #333; }
.closeall { padding: 0 6px 0 0; color: #333; }
.sheet { display: flex; flex: 1; min-height: 0; background: #fff; }
.viewport { flex: 1; min-width: 0; overflow: hidden; }
table { width: 855px; height: calc(100% + 7px); table-layout: fixed; border-collapse: separate; border-spacing: 0; font: 13px/18px "Noto Sans", "Open Sans", sans-serif; color: #3a3a3a; }
.c0 { width: 18px; }
.c-CustomerID { width: 96px; }
.c-FirstName { width: 92px; }
.c-LastName { width: 89px; }
.c-Address { width: 174px; }
.c-City { width: 126px; }
.c-State { width: 60px; }
.c-PostalCode { width: 98px; }
.c-DateOfBirth { width: 102px; }
th { height: 20px; padding: 0; background: #dfe3e6; border: solid #c3c8cc; border-width: 1px 1px 0 0; font-weight: 400; color: #4a4a4a; vertical-align: top; }
th div { display: flex; align-items: center; padding-right: 5px; }
th span { flex: 1; text-align: center; padding-right: 4px; line-height: 17px; }
.arr { border: 3px solid transparent; border-top: 4px solid #444; border-bottom: 0; }
.active { background: #f8d04f; }
td { height: 19px; padding: 0 0 0 2px; border: solid #dcdcdc; border-width: 0 1px 1px 0; line-height: 18px; white-space: nowrap; overflow: hidden; }
tr:nth-child(even) td { background: #f4f4f4; }
td:last-child { text-align: right; padding-right: 0; }
tr td.sel { background: #dde1e5; border-color: #bfc5ca; }
.chosen td { background: #a3ceef; border-color: #a3ceef; color: #1b2c3c; }
.chosen td.sel { background: #ffd75e; }
.chosen td:nth-child(2) { background: #fff; border-color: #d99aa8; }
.chosen td:nth-child(2) span { background: #000; color: #fff; }
.vbar { display: flex; flex-direction: column; align-items: center; flex: none; width: 16px; padding: 5px 0; background: #f3f3f3; }
.vbar .thumb { width: 8px; height: 34px; margin-top: 6px; border-radius: 4px; background: #777; }
.recnav { display: flex; align-items: center; flex: none; height: 17px; border: solid #c9cdd0; border-width: 1px 0; background: linear-gradient(#edf0f1, #dfe3e5); font-size: 10px; line-height: 15px; color: #555; }
.rl { width: 36px; margin-left: 3px; white-space: nowrap; }
.recnav button { flex: none; justify-content: center; width: 15px; }
.recnav .newr { width: 14px; margin-right: 9px; }
.recnav input { flex: none; height: 15px; padding: 0 3px; background: #fff; color: #333; }
.recnav .num { width: 48px; margin: 0 3px 0 4px; }
.recnav .nofilter { width: 78px; gap: 2px; border: solid #c5c9cc; border-width: 0 1px; color: #adb1b4; }
.recnav .rsearch { width: 70px; margin-left: 4px; padding: 0 2px; }
.corner { width: 16px; height: 15px; margin-left: auto; background: #c6c8c9; }
.watermark { position: absolute; right: 51px; bottom: 9px; width: 229px; color: #b9b9b9; white-space: nowrap; }
.watermark p { margin: 0; font-size: 19px; line-height: 25px; }
.watermark .sub { font-size: 14px; line-height: 20px; }

.status { display: flex; align-items: center; flex: none; height: 22px; padding-left: 10px; background: #f3f3f3; font-size: 11px; }
.status span { flex: 1; padding-top: 2px; }
.status button { justify-content: center; width: 40px; height: 22px; color: #222; }
.status .on { background: #dedede; }

.taskbar { display: flex; align-items: center; flex: none; height: 40px; background: linear-gradient(90deg, #20383f 0%, #20363f 68%, #182a42 76%, #17273d 100%); color: #fff; }
.start { flex: none; justify-content: center; width: 47px; height: 40px; }
.tsearch { display: flex; align-items: center; flex: none; width: 287px; height: 39px; padding: 0 4px 0 11px; gap: 12px; border: 1px solid #c8c8c8; background: #f2f2f2; color: #333; font-size: 14px; }
.tsearch input { flex: 1; padding: 2px 0 0; }
.tsearch input::placeholder { color: #444; opacity: 1; }
.apps { display: grid; grid-template-columns: repeat(12, 1fr); flex: none; width: 596px; height: 40px; }
.apps button { position: relative; justify-content: center; }
.run::after { content: ""; position: absolute; left: 5px; right: 5px; bottom: 0; height: 2px; background: #76b3de; }
.sticky { background: #a8692f; border-bottom: 2px solid #ee7416; }
.apps .front { background: #4a5b65; border-bottom: 2px solid #76b3de; }
.dtext { font: 10px "Open Sans", sans-serif; fill: #fff; stroke: none; }
.wtext { font: bold 9px "Open Sans", sans-serif; fill: #fff; stroke: none; }
.tray { display: flex; align-items: center; flex: 1; height: 40px; }
.weather { flex: 1; gap: 6px; margin-left: 25px; font-size: 14px; }
.t { justify-content: center; width: 24px; flex: none; }
.clock { flex-direction: column; justify-content: center; flex: none; width: 66px; font-size: 11px; }
.clock span { line-height: 18px; }
.notif { flex: none; margin: 0 18px 0 15px; }
.peek { width: 1px; height: 40px; margin-right: 4px; background: #5a6a7c; }

.recorder { position: absolute; top: 240px; right: 62px; display: flex; flex-direction: column; align-items: center; width: 26px; height: 224px; padding-top: 4px; border-radius: 3px; background: #1c1c1c; color: #ddd; }
.recorder button { margin-top: 9px; }
.recorder svg + button { margin-top: 7px; }
.recorder time { margin-top: 2px; font-size: 9px; line-height: 10px; }
.recorder time + button { margin-top: 7px; }
.dash { width: 24px; margin-top: 5px; border-top: 2px dotted #ddd; }
.cursor { position: absolute; left: 50px; top: 294px; }
</style>
